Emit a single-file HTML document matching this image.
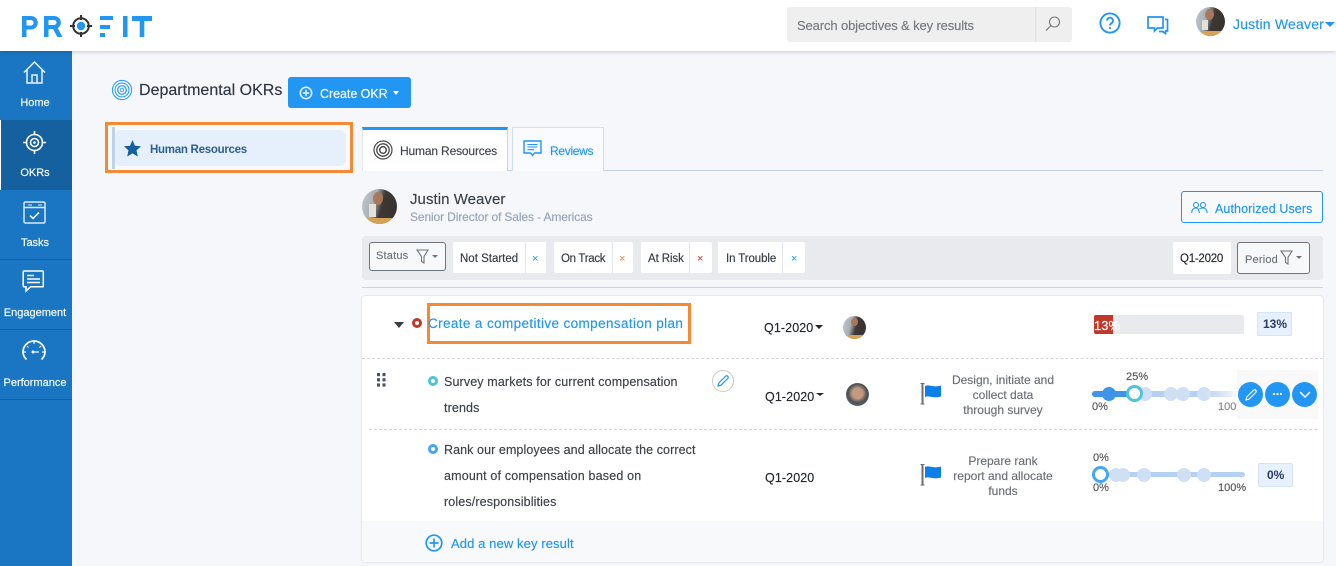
<!DOCTYPE html>
<html><head><meta charset="utf-8">
<style>
html,body{margin:0;padding:0;width:1336px;height:566px;overflow:hidden;background:#f5f7fa;font-family:"Liberation Sans",sans-serif;-webkit-text-stroke:.15px;}
.a{position:absolute;white-space:nowrap;}
svg{position:absolute;overflow:visible;}
.nav{position:absolute;left:0;width:72px;height:69px;border-bottom:1px solid #15609f;}
.nl{position:absolute;left:-1px;width:72px;text-align:center;color:#fff;font-size:11px;top:46px;}
.chip{position:absolute;top:242px;height:31px;background:#fff;border-radius:2px;}
.chip span{position:absolute;top:11px;font-size:11.5px;color:#343a40;white-space:nowrap;}
.chip i{position:absolute;top:0;width:1px;height:31px;background:#e3e6ea;}
.chip b{position:absolute;top:11px;font-size:11px;font-weight:normal;-webkit-text-stroke:0;}
.t{font-size:12.5px;color:#3d4148;}
.g{font-size:12px;color:#6b6f75;text-align:center;line-height:15px;}
.dot{position:absolute;width:14px;height:14px;border-radius:50%;background:#cfe0f5;}
.btn{position:absolute;width:25px;height:25px;border-radius:50%;background:#2196f3;top:382px;}
.av{background:linear-gradient(105deg,#c5ccd2 0%,#a5aeb4 35%,#3d3834 55%,#35302e 100%);overflow:hidden;border-radius:50%;}
</style></head><body>

<!-- header -->
<div class="a" style="left:0;top:0;width:1336px;height:51px;background:#fff;box-shadow:0 1px 4px rgba(0,0,0,.18);z-index:2;">
 <svg style="left:0;top:0" width="200" height="51">
  <path d="M22 16H31a6.600 6.600 0 0 1 0 13.500H26.500V37H22zM26.500 20V25.500H30.800a2.700 2.700 0 0 0 0-5.500z" fill="#2196f3" fill-rule="evenodd"/>
  <path d="M44 16H54.500a6.500 6.500 0 0 1 3.200 12.100L62.500 37H57.300L53 29H48.500V37H44zM48.500 20V25H54a2.500 2.500 0 0 0 0-5z" fill="#2196f3" fill-rule="evenodd"/>
  <circle cx="81" cy="26" r="7.800" fill="none" stroke="#333" stroke-width="2"/>
  <circle cx="81" cy="26" r="4.200" fill="#2196f3"/>
  <path d="M81 15V20M81 32V37M70 26H75M87 26H92" stroke="#333" stroke-width="2"/>
  <path d="M100 16H113V20H100zM100 25H110V29H100zM100 33H105V37H100z" fill="#2196f3"/>
  <path d="M123 16H127.500V37H123z" fill="#2196f3"/>
  <path d="M132 16H152V21H144.300V37H139.700V21H132z" fill="#2196f3"/>
 </svg>
 <div class="a" style="left:787px;top:7px;width:285px;height:35px;background:#efefef;border-radius:3px;"></div>
 <div class="a" style="left:1035px;top:7px;width:1px;height:35px;background:#e0e0e0;"></div>
 <div class="a" style="left:797px;top:18px;font-size:13px;color:#75797e;letter-spacing:-.12px;">Search objectives &amp; key results</div>
 <svg style="left:1045px;top:16px" width="16" height="16"><circle cx="9.500" cy="6" r="5" fill="none" stroke="#777" stroke-width="1.100"/><path d="M6 9.500L1 14.500" stroke="#777" stroke-width="1.200"/></svg>
 <svg style="left:1099px;top:12px" width="22" height="22"><circle cx="11" cy="11" r="9.600" fill="none" stroke="#2196f3" stroke-width="1.900"/><path d="M8 8.600a3 3 0 1 1 4.600 2.600c-1 .6-1.600 1.100-1.600 2.300" fill="none" stroke="#2196f3" stroke-width="1.800"/><circle cx="11" cy="16" r="1.100" fill="#2196f3"/></svg>
 <svg style="left:1147px;top:16px" width="22" height="19" fill="none" stroke="#2196f3" stroke-width="1.700"><path d="M1 1H16V12H10.500L7.500 15V12H1z"/><path d="M18 3.500H20.500V15H18.500V17.500L15.500 15.500H12"/></svg>
 <div class="a av" style="left:1196px;top:7px;width:29px;height:29px;">
   <div class="a" style="left:9px;top:2px;width:9px;height:11px;border-radius:50%;background:#a9785c;"></div>
   <div class="a" style="left:6px;top:13px;width:6px;height:10px;background:#e4e0da;"></div>
   <div class="a" style="left:3px;top:24px;width:22px;height:5px;background:#d6a257;"></div>
 </div>
 <div class="a" style="left:1233px;top:16px;font-size:14px;color:#2196f3;letter-spacing:.2px;">Justin Weaver</div>
 <div class="a" style="left:1325px;top:22px;border-left:5px solid transparent;border-right:5px solid transparent;border-top:5px solid #2196f3;"></div>
</div>

<!-- sidebar -->
<div class="a" style="left:0;top:51px;width:72px;height:515px;background:#1a76c2;"></div>
<div class="nav" style="top:51px;border:0;height:69px;"><div class="nl">Home</div>
 <svg style="left:23px;top:10px" width="24" height="24" fill="none" stroke="#e8f2fb" stroke-width="1.500"><path d="M1 11.500L11.500 1L22 11.500M4 9V22H19V9M9 22V14H14V22"/></svg></div>
<div class="nav" style="top:120px;height:70px;background:#15609f;border:0;border-left:1px solid #fff;width:71px;"><div class="nl" style="top:47px;left:-1px;width:70px">OKRs</div>
 <svg style="left:22px;top:11px" width="24" height="24" fill="none" stroke="#fff"><circle cx="11.500" cy="11.500" r="8" stroke-width="1.600"/><circle cx="11.500" cy="11.500" r="4" stroke-width="1.600"/><circle cx="11.500" cy="11.500" r="1.300" fill="#fff" stroke="none"/><path d="M11.500 0V4M11.500 19V23M0 11.500H4M19 11.500H23" stroke-width="1.600"/></svg></div>
<div class="nav" style="top:190px;"><div class="nl" style="top:47px">Tasks</div>
 <svg style="left:23px;top:11px" width="24" height="24" fill="none" stroke="#dbe9f6" stroke-width="1.500"><rect x="1" y="1" width="21" height="21" rx="1.500"/><path d="M1 6.500H22" /><path d="M5 4H9M15 4H19" stroke-width="1"/><path d="M7 14.500L10 17.500L16 11.500" stroke="#fff"/></svg></div>
<div class="nav" style="top:260px;"><div class="nl" style="top:47px">Engagement</div>
 <svg style="left:22px;top:10px" width="24" height="24" fill="none" stroke="#fff" stroke-width="1.500"><path d="M2 1H20.500a.8.8 0 0 1 .8.800V16a.8.8 0 0 1-.8.800H8.500L4 21V16.800H2a.8.800 0 0 1-.8-.800V1.800A.8.800 0 0 1 2 1z"/><path d="M5 5.500H12M5 9H18M5 12.500H18" stroke-width="1.400"/></svg></div>
<div class="nav" style="top:330px;"><div class="nl" style="top:47px">Performance</div>
 <svg style="left:22px;top:9px" width="24" height="24" fill="none" stroke="#fff" stroke-width="1.700"><path d="M4.500 20.500C2.500 18.500 1 16 1 13A11 11 0 0 1 23 13C23 16 21.500 18.500 19.500 20.500"/><path d="M11.500 13H17" stroke-width="1.200"/><circle cx="11" cy="13" r="1.500" fill="#fff" stroke="none"/><path d="M12 3V5M5 7L6.500 8.500M19 7L17.500 8.500M2 13H4M20 13H22" stroke-width="1.200"/></svg></div>

<!-- page title -->
<svg style="left:111px;top:79px" width="22" height="22" fill="none" stroke="#2196f3"><circle cx="11" cy="11" r="9.600" stroke-width="1"/><circle cx="11" cy="11" r="7" stroke-width="1"/><circle cx="11" cy="11" r="4.300" stroke-width="1.200"/><circle cx="11" cy="11" r="1.800" stroke-width=".8"/></svg>
<div class="a" style="left:139px;top:82px;font-size:16px;color:#2f3542;letter-spacing:.01px;">Departmental OKRs</div>
<div class="a" style="left:288px;top:77px;width:123px;height:31px;background:#2196f3;border-radius:3px;"></div>
<svg style="left:299px;top:86px" width="14" height="14" fill="none" stroke="#e6f3fe" stroke-width="1.500"><circle cx="7" cy="7" r="5.700"/><path d="M3.800 7H10.200M7 3.800V10.200"/></svg>
<div class="a" style="left:320px;top:87px;font-size:12.500px;color:#fff;letter-spacing:-.05px;">Create OKR</div>
<div class="a" style="left:393px;top:91px;border-left:3.500px solid transparent;border-right:3.500px solid transparent;border-top:4px solid #fff;"></div>

<!-- HR card -->
<div class="a" style="left:105px;top:122px;width:248px;height:51px;box-sizing:border-box;border:3px solid #f58a36;background:#f8f9fb;"></div>
<div class="a" style="left:112px;top:127px;width:3px;height:42px;background:#bcd3ea;"></div>
<div class="a" style="left:115px;top:130px;width:231px;height:36px;background:#e5f0fc;border-radius:6px;"></div>
<svg style="left:124px;top:140px" width="18" height="18"><path d="M8.500 0L11 5.700L17 6.300L12.500 10.400L13.800 16.500L8.500 13.400L3.200 16.500L4.500 10.400L0 6.300L6 5.700z" fill="#14609f"/></svg>
<div class="a" style="left:150px;top:144px;font-size:11.500px;font-weight:bold;color:#2d5f8f;letter-spacing:-.27px;-webkit-text-stroke:0;">Human Resources</div>

<!-- tabs -->
<div class="a" style="left:362px;top:170px;width:961px;height:1px;background:#c5d1e2;"></div>
<div class="a" style="left:362px;top:127px;width:146px;height:44px;box-sizing:border-box;background:#fff;border-top:3px solid #2196f3;border-right:1px solid #c5d5ea;border-left:1px solid #e3e9f1;"></div>
<svg style="left:373px;top:140px" width="20" height="20" fill="none" stroke="#444"><circle cx="10" cy="10" r="9" stroke-width="1.200"/><circle cx="10" cy="10" r="6.200" stroke-width="1.300"/><circle cx="10" cy="10" r="3.300" stroke-width="1.400"/></svg>
<div class="a" style="left:400px;top:144px;font-size:12px;color:#3f4349;letter-spacing:-.16px;">Human Resources</div>
<div class="a" style="left:512px;top:127px;width:92px;height:44px;box-sizing:border-box;background:#f9fbfe;border:1px solid #cddff3;border-bottom:0;"></div>
<svg style="left:523px;top:140px" width="19" height="17" fill="none" stroke="#2196f3" stroke-width="1.400"><path d="M1 1H18V13H11.500L9.500 15.500L7.500 13H1z"/><path d="M4.500 4.500H14.500M4.500 7H14.500M4.500 9.700H11" stroke-width="1.100"/></svg>
<div class="a" style="left:550px;top:144px;font-size:12px;color:#2196f3;letter-spacing:-.3px;">Reviews</div>

<!-- user -->
<div class="a av" style="left:362px;top:189px;width:35px;height:35px;">
 <div class="a" style="left:11px;top:3px;width:10px;height:13px;border-radius:50%;background:#a9785c;"></div>
 <div class="a" style="left:7px;top:15px;width:7px;height:13px;background:#e4e0da;"></div>
 <div class="a" style="left:3px;top:29px;width:28px;height:6px;background:#d6a257;"></div>
</div>
<div class="a" style="left:410px;top:191px;font-size:15px;color:#3a3f46;letter-spacing:.05px;">Justin Weaver</div>
<div class="a" style="left:410px;top:210px;font-size:12px;color:#97a4b8;letter-spacing:-.12px;">Senior Director of Sales - Americas</div>
<div class="a" style="left:1181px;top:191px;width:142px;height:32px;box-sizing:border-box;border:1px solid #2196f3;border-radius:3px;background:#f7f9fb;"></div>
<svg style="left:1191px;top:202px" width="17" height="12" fill="none" stroke="#2196f3" stroke-width="1.100"><circle cx="5" cy="3" r="2.500"/><circle cx="12" cy="3" r="2.500"/><path d="M.6 11C1 7 3 6 5 6S8 7.500 8.400 11M8.500 6.800C9.500 6 10.500 6 12 6C14 6 15.800 7 16.300 11"/></svg>
<div class="a" style="left:1215px;top:202px;font-size:12.500px;color:#2196f3;letter-spacing:.1px;">Authorized Users</div>

<!-- filter bar -->
<div class="a" style="left:362px;top:236px;width:961px;height:44px;background:#e8eaed;border-radius:3px;"></div>
<div class="a" style="left:362px;top:287px;width:961px;height:1px;background:#cdd3dc;"></div>
<div class="a" style="left:369px;top:242px;width:77px;height:29px;box-sizing:border-box;border:1px solid #6c757d;border-radius:3px;background:#f7f8f9;"></div>
<div class="a" style="left:376px;top:250px;font-size:11px;color:#6c757d;letter-spacing:.2px;">Status</div>
<svg style="left:416px;top:249px" width="24" height="15" fill="none" stroke="#6c757d" stroke-width="1.100"><path d="M1 1H12L8 7.500V14L5.500 12.500V7.500z"/><path d="M16 6H22L19 9z" fill="#6c757d" stroke="none"/></svg>

<div class="chip" style="left:453px;width:93px;"><span style="left:7px">Not Started</span><i style="left:72px"></i><b style="left:79px;color:#2196f3">×</b></div>
<div class="chip" style="left:554px;width:79px;"><span style="left:7px;letter-spacing:-.3px">On Track</span><i style="left:58px"></i><b style="left:65px;color:#e0863b">×</b></div>
<div class="chip" style="left:641px;width:71px;"><span style="left:7px;letter-spacing:-.1px">At Risk</span><i style="left:48px"></i><b style="left:56px;color:#c0392b">×</b></div>
<div class="chip" style="left:718px;width:87px;"><span style="left:8px;letter-spacing:-.1px">In Trouble</span><i style="left:64px"></i><b style="left:73px;color:#2196f3">×</b></div>

<div class="a" style="left:1173px;top:242px;width:58px;height:32px;background:#fff;border-radius:2px;"></div>
<div class="a" style="left:1180px;top:253px;font-size:11.500px;color:#23272b;letter-spacing:-.25px;">Q1-2020</div>
<div class="a" style="left:1237px;top:242px;width:73px;height:32px;box-sizing:border-box;border:1px solid #6c757d;border-radius:3px;background:#f7f8f9;"></div>
<div class="a" style="left:1245px;top:254px;font-size:11px;color:#6c757d;letter-spacing:.2px;">Period</div>
<svg style="left:1280px;top:250px" width="24" height="15" fill="none" stroke="#6c757d" stroke-width="1.100"><path d="M1 1H12L8 7.500V14L5.500 12.500V7.500z"/><path d="M16 6H22L19 9z" fill="#6c757d" stroke="none"/></svg>

<!-- main card -->
<div class="a" style="left:362px;top:296px;width:961px;height:266px;background:#fff;border-radius:3px;box-shadow:0 0 2px rgba(0,0,0,.16);"></div>
<div class="a" style="left:362px;top:521px;width:961px;height:41px;background:#f8f9fa;border-radius:0 0 3px 3px;"></div>

<div class="a" style="left:394px;top:322px;border-left:5.500px solid transparent;border-right:5.500px solid transparent;border-top:6px solid #3a3f46;"></div>
<div class="a" style="left:412px;top:318px;width:10px;height:10px;box-sizing:border-box;border:3px solid #c0392b;border-radius:50%;"></div>
<div class="a" style="left:427px;top:303px;width:264px;height:41px;box-sizing:border-box;border:3px solid #f58a36;"></div>
<div class="a" style="left:428px;top:316px;font-size:13.500px;color:#2196f3;letter-spacing:.38px;">Create a competitive compensation plan</div>
<div class="a" style="left:764px;top:321px;font-size:12.500px;color:#23272b;letter-spacing:.1px;">Q1-2020</div>
<div class="a" style="left:815px;top:325px;border-left:4px solid transparent;border-right:4px solid transparent;border-top:4px solid #23272b;"></div>
<div class="a av" style="left:843px;top:316px;width:23px;height:23px;"><div class="a" style="left:8px;top:2px;width:7px;height:8px;border-radius:50%;background:#a9785c;"></div><div class="a" style="left:3px;top:19px;width:17px;height:4px;background:#d6a257;"></div></div>

<div class="a" style="left:1094px;top:315px;width:150px;height:19px;background:#e8eaed;border-radius:2px;"></div>
<div class="a" style="left:1094px;top:315px;width:19px;height:19px;background:#c0392b;border-radius:2px 0 0 2px;"></div>
<div class="a" style="left:1094px;top:318px;font-size:13px;color:#fff;">13%</div>
<div class="a" style="left:1257px;top:312px;width:35px;height:24px;box-sizing:border-box;background:#e6f1fd;border:1px solid #d4e5f8;border-radius:2px;"></div>
<div class="a" style="left:1263px;top:317px;font-size:12px;font-weight:bold;color:#2a3a66;-webkit-text-stroke:0;">13%</div>

<div class="a" style="left:362px;top:358px;width:961px;border-top:1px dashed #d6d6d6;"></div>

<!-- KR 1 -->
<svg style="left:377px;top:373px" width="9" height="14" fill="#4a5160"><rect x="0" y="0" width="3" height="3.200"/><rect x="5.500" y="0" width="3" height="3.200"/><rect x="0" y="5.200" width="3" height="3.200"/><rect x="5.500" y="5.200" width="3" height="3.200"/><rect x="0" y="10.400" width="3" height="3.200"/><rect x="5.500" y="10.400" width="3" height="3.200"/></svg>
<div class="a" style="left:428px;top:376px;width:10px;height:10px;box-sizing:border-box;border:3px solid #4cc4d9;border-radius:50%;"></div>
<div class="a t" style="left:444px;top:375px;letter-spacing:.13px;">Survey markets for current compensation</div>
<div class="a t" style="left:444px;top:401px;letter-spacing:.13px;">trends</div>
<div class="a" style="left:712px;top:370px;width:22px;height:22px;box-sizing:border-box;border:1px solid #c8c8c8;border-radius:50%;background:#fff;"></div>
<svg style="left:717px;top:375px" width="12" height="12" fill="none" stroke="#2196f3" stroke-width="1.200"><path d="M1 11L1.800 8L8.500 1.300C9.300.6 10.200.7 10.800 1.300S11.400 2.800 10.700 3.500L4 10.200z"/></svg>
<div class="a" style="left:765px;top:390px;font-size:12.500px;color:#23272b;letter-spacing:.1px;">Q1-2020</div>
<div class="a" style="left:816px;top:393px;border-left:4px solid transparent;border-right:4px solid transparent;border-top:3.500px solid #23272b;"></div>
<div class="a" style="left:846px;top:383px;width:23px;height:23px;border-radius:50%;background:radial-gradient(circle at 50% 45%,#c49a7e 0 30%,#4b5158 55%,#6e7a85 100%);"></div>

<svg style="left:920px;top:382px" width="22" height="24"><path d="M2.500 2V22" stroke="#6c6c6c" stroke-width="2"/><path d="M0.500 1.500H4.500M0.500 22H4.500" stroke="#6c6c6c" stroke-width="1"/><path d="M5 4C9 2 13 6 21 3.500V14.500C13 17 9 13 5 15z" fill="#0d7fe8"/></svg>
<div class="a g" style="left:935px;top:373px;width:136px;">Design, initiate and<br>collect data<br>through survey</div>

<div class="a" style="left:1092px;top:391px;width:146px;height:6px;background:#b5d0f0;border-radius:3px;"></div>
<div class="a" style="left:1092px;top:391px;width:42px;height:6px;background:#3f94ea;border-radius:3px;"></div>
<div class="dot" style="left:1102px;top:387px;background:#3f94ea"></div>
<div class="dot" style="left:1138px;top:387px"></div>
<div class="dot" style="left:1164px;top:387px"></div>
<div class="dot" style="left:1176px;top:387px"></div>
<div class="dot" style="left:1197px;top:387px"></div>
<div class="a" style="left:1126px;top:386px;width:17px;height:17px;box-sizing:border-box;border:3px solid #4cc4d9;border-radius:50%;background:#fff;margin-top:-1px;"></div>
<div class="a" style="left:1126px;top:371px;font-size:11px;color:#555;letter-spacing:.1px;">25%</div>
<div class="a" style="left:1092px;top:401px;font-size:11px;color:#555;">0%</div>
<div class="a" style="left:1218px;top:401px;font-size:11px;color:#888;">100%</div>
<div class="a" style="left:1205px;top:391px;width:32px;height:6px;background:linear-gradient(90deg,rgba(249,249,249,0),#f9f9f9);"></div>
<div class="a" style="left:1237px;top:370px;width:81px;height:49px;background:#f9f9f9;"></div>
<div class="btn" style="left:1238px"></div><div class="btn" style="left:1265px"></div><div class="btn" style="left:1292px"></div>
<svg style="left:1245px;top:389px" width="12" height="12" fill="none" stroke="#fff" stroke-width="1.100"><path d="M1 11L1.800 8L8.500 1.300C9.300.6 10.200.7 10.800 1.300S11.400 2.800 10.700 3.500L4 10.200z"/></svg>
<svg style="left:1273px;top:393px" width="10" height="3" fill="#fff"><rect x="0" width="2" height="2"/><rect x="3.500" width="2" height="2"/><rect x="7" width="2" height="2"/></svg>
<svg style="left:1299px;top:391px" width="12" height="8" fill="none" stroke="#fff" stroke-width="1.500"><path d="M1 1L6 6L11 1"/></svg>

<div class="a" style="left:369px;top:429px;width:948px;border-top:1px dashed #d6d6d6;"></div>

<!-- KR 2 -->
<div class="a" style="left:428px;top:444px;width:10px;height:10px;box-sizing:border-box;border:3px solid #42a5f5;border-radius:50%;"></div>
<div class="a t" style="left:444px;top:443px;letter-spacing:.08px;">Rank our employees and allocate the correct</div>
<div class="a t" style="left:444px;top:469px;letter-spacing:.18px;">amount of compensation based on</div>
<div class="a t" style="left:444px;top:495px;letter-spacing:.13px;">roles/responsiblities</div>
<div class="a" style="left:765px;top:471px;font-size:12.500px;color:#23272b;letter-spacing:.1px;">Q1-2020</div>

<svg style="left:920px;top:463px" width="22" height="24"><path d="M2.500 2V22" stroke="#6c6c6c" stroke-width="2"/><path d="M0.500 1.500H4.500M0.500 22H4.500" stroke="#6c6c6c" stroke-width="1"/><path d="M5 4C9 2 13 6 21 3.500V14.500C13 17 9 13 5 15z" fill="#0d7fe8"/></svg>
<div class="a g" style="left:935px;top:454px;width:136px;">Prepare rank<br>report and allocate<br>funds</div>

<div class="a" style="left:1093px;top:472px;width:152px;height:5px;background:#b5d0f0;border-radius:3px;"></div>
<div class="dot" style="left:1109px;top:468px"></div>
<div class="dot" style="left:1116px;top:468px"></div>
<div class="dot" style="left:1137px;top:468px"></div>
<div class="dot" style="left:1177px;top:468px"></div>
<div class="dot" style="left:1197px;top:468px"></div>
<div class="a" style="left:1092px;top:466px;width:17px;height:17px;box-sizing:border-box;border:3px solid #42a5f5;border-radius:50%;background:#fff;"></div>
<div class="a" style="left:1093px;top:452px;font-size:11px;color:#555;">0%</div>
<div class="a" style="left:1093px;top:482px;font-size:11px;color:#555;">0%</div>
<div class="a" style="left:1218px;top:482px;font-size:11px;color:#555;">100%</div>
<div class="a" style="left:1258px;top:463px;width:35px;height:24px;box-sizing:border-box;background:#e6f1fd;border:1px solid #d4e5f8;border-radius:2px;"></div>
<div class="a" style="left:1267px;top:468px;font-size:12px;font-weight:bold;color:#2a3a66;-webkit-text-stroke:0;">0%</div>

<!-- add -->
<svg style="left:425px;top:534px" width="18" height="18" fill="none" stroke="#2196f3" stroke-width="1.700"><circle cx="9" cy="9" r="7.800"/><path d="M4.500 9H13.500M9 4.500V13.500"/></svg>
<div class="a" style="left:451px;top:536px;font-size:13px;color:#2196f3;letter-spacing:.1px;">Add a new key result</div>

</body></html>
